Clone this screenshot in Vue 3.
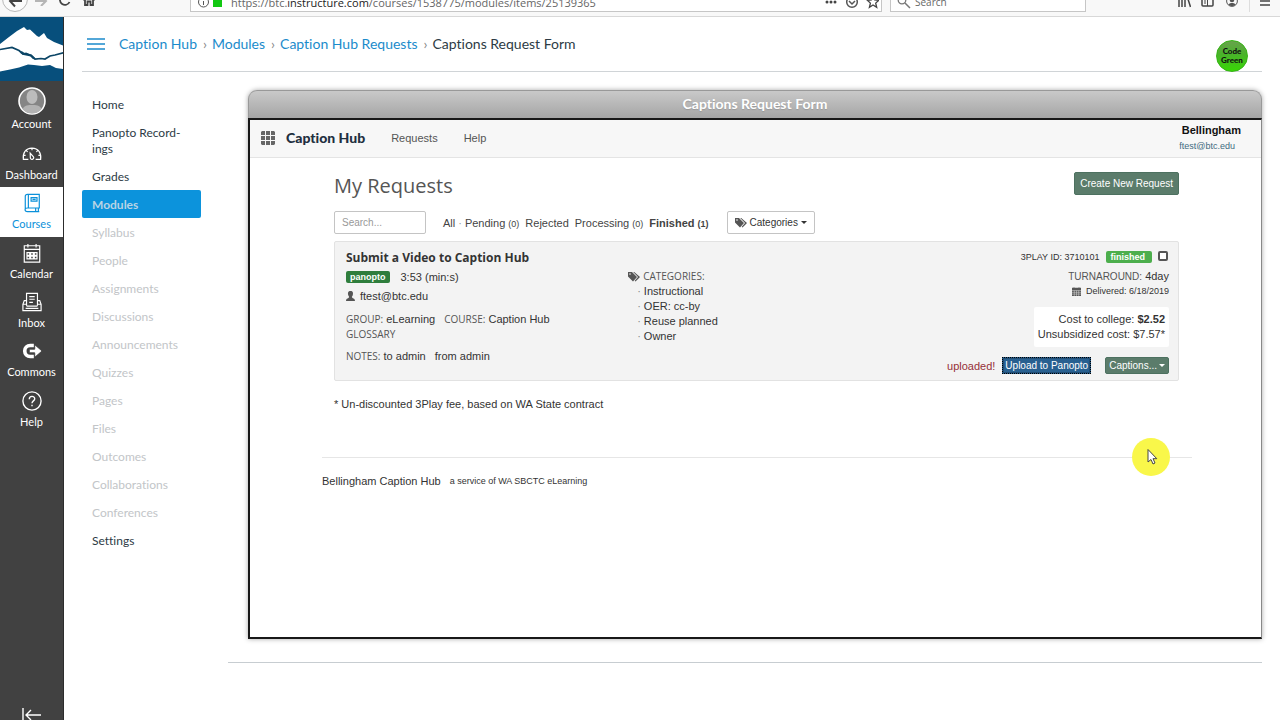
<script setup>
import { ref } from 'vue'

const search = ref('')
const selected = ref(false)

const menu = [
  { label: 'Home' },
  { label: 'Panopto Record-ings' },
  { label: 'Grades' },
  { label: 'Modules', state: 'active' },
  { label: 'Syllabus', state: 'off' },
  { label: 'People', state: 'off' },
  { label: 'Assignments', state: 'off' },
  { label: 'Discussions', state: 'off' },
  { label: 'Announcements', state: 'off' },
  { label: 'Quizzes', state: 'off' },
  { label: 'Pages', state: 'off' },
  { label: 'Files', state: 'off' },
  { label: 'Outcomes', state: 'off' },
  { label: 'Collaborations', state: 'off' },
  { label: 'Conferences', state: 'off' },
  { label: 'Settings' }
]
const categories = ['Instructional', 'OER: cc-by', 'Reuse planned', 'Owner']
</script>

<template>
  <div class="page">
    <div class="browser">
      <div class="nav-tools">
        <button class="back" aria-label="Back">
          <svg width="26" height="26" viewBox="0 0 26 26"><circle cx="13" cy="13" r="12.500" fill="#fbfbfb" stroke="#b9b9b9"/><path d="M20 15H8M13 9.500l-5 5.500 5 5.500" fill="none" stroke="#444" stroke-width="2"/></svg>
        </button>
        <button class="tool" aria-label="Forward">
          <svg width="14" height="14" viewBox="0 0 14 14"><path d="M1 9h11M7 4l5 5-5 5" fill="none" stroke="#b5b5b5" stroke-width="2"/></svg>
        </button>
        <button class="tool" aria-label="Reload">
          <svg width="14" height="14" viewBox="0 0 14 14"><path d="M11.500 10A5 5 0 1 1 11 5M12.500 2v4.500H8" fill="none" stroke="#444" stroke-width="1.800"/></svg>
        </button>
        <button class="tool" aria-label="Home page">
          <svg width="14" height="14" viewBox="0 0 14 14"><path d="M1 8l6-6 6 6M3 7.500V13h2.500V9.500h3V13H11V7.500M6 6.500h2" fill="none" stroke="#444" stroke-width="1.800"/></svg>
        </button>
      </div>
      <div class="url">
        <svg width="11" height="12" viewBox="0 0 11 12"><circle cx="5.500" cy="6" r="5" fill="none" stroke="#555"/><path d="M5.500 5v4M5.500 3v1" stroke="#555"/></svg>
        <span class="lock"></span>
        <span class="address">https://btc.<b>instructure.com</b>/courses/1538775/modules/items/25139365</span>
        <svg width="54" height="14" viewBox="0 0 54 14"><g fill="#444"><circle cx="2" cy="7" r="1.500"/><circle cx="6" cy="7" r="1.500"/><circle cx="10" cy="7" r="1.500"/></g><circle cx="27" cy="7" r="5.300" fill="none" stroke="#555" stroke-width="1.500"/><path d="M24 6l3 3 3-3" fill="none" stroke="#555" stroke-width="1.500"/><path d="M48 1l1.700 4 4 .3-3 2.800 1 4.200-3.700-2.300-3.600 2.300 1-4.200-3-2.800 4-.3z" fill="none" stroke="#444" stroke-width="1.300"/></svg>
      </div>
      <div class="find">
        <svg width="14" height="14" viewBox="0 0 14 14"><circle cx="5" cy="5" r="3.800" fill="none" stroke="#777" stroke-width="1.300"/><path d="M8 8l5 5" stroke="#777" stroke-width="1.500"/></svg>
        <span>Search</span>
      </div>
      <div class="right-tools">
        <svg width="13" height="14" viewBox="0 0 13 14"><path d="M1 1v12M4 1v12M7 1v12M9 2l3.500 11" stroke="#444" stroke-width="1.500"/></svg>
        <svg width="14" height="14" viewBox="0 0 14 14"><rect x="1" y="2" width="11" height="10" rx="1" fill="none" stroke="#444" stroke-width="1.500"/><path d="M6.500 2v10M3 7h2M3 9h2" stroke="#444"/></svg>
        <svg width="14" height="14" viewBox="0 0 14 14"><circle cx="7" cy="7" r="5.400" fill="none" stroke="#555"/><circle cx="7" cy="6" r="2.300" fill="#555"/><path d="M3.500 10.500c1-2 6-2 7 0-2 2-5 2-7 0z" fill="#555"/></svg>
        <i class="tool-rule"></i>
        <svg width="10" height="14" viewBox="0 0 10 14"><path d="M0 3h10M0 7h10M0 11h10" stroke="#444" stroke-width="1.600"/></svg>
      </div>
    </div>

    <div class="shell">
      <nav class="global" aria-label="Global">
        <a class="logo" href="#" aria-label="College home">
          <svg width="64" height="64" viewBox="0 0 64 64"><rect width="64" height="64" fill="#074f7c"/><path d="M0 27L9 20l8-6 7-4 3 3 3-.5 7 6.500 2 1 5-4 3 5 7 4 10 4v23l-8-1-6-3-8 1-8-1-6-.5-9 3-9 2-10 2z" fill="#fff"/><path d="M0 32.500l12-2 7 3 4 3.500 3-.5 5 2 4 3.500 6-.5 4 .5 5-3 5-1 9-2.500" fill="none" stroke="#0b4566" stroke-width="1.700"/><path d="M21 35l3 2 7 1.500 3 3" fill="none" stroke="#0b4566" stroke-width="2.200"/></svg>
        </a>
        <a class="account" href="#">
          <svg width="28" height="28" viewBox="0 0 28 28"><circle cx="14" cy="14" r="13" fill="#858585" stroke="#fff" stroke-width="1.600"/><ellipse cx="14" cy="10" rx="5.500" ry="7" fill="#bcbcbc"/><path d="M4.500 22c2-4 6-4 9.500-4s8 0 9.500 4c-5 6-14 6-19 0z" fill="#b2b2b2"/></svg>
          <span>Account</span>
        </a>
        <div class="rows">
          <a href="#">
            <svg width="20" height="20" viewBox="0 0 22 22" fill="none" stroke="#fff" stroke-width="1.300"><path d="M7 17H1.500C.5 10 4 4.500 11 4.500S21.500 10 20.500 17H15M11 4.500V7M4.500 7l1.700 1.700M17.500 7l-1.700 1.700M2 12.500h2M18 12.500h2"/><path d="M9 10l3.600 4.200c1.400 2.200-2.600 4-3.400 1.400z"/></svg>
            <span>Dashboard</span>
          </a>
          <a class="current" href="#">
            <svg width="20" height="20" viewBox="0 0 22 22" fill="none" stroke="#0b91da" stroke-width="1.300"><path d="M6 1.500h13v15H6c-3.500 0-3.500 4 0 4h13M3.600 18V3.500c0-1 .8-2 2.400-2M7 2v14M18 17v3M15 17v3"/><path d="M10 5h6.500v4H10zM11.500 7h3.500"/></svg>
            <span>Courses</span>
          </a>
          <a href="#">
            <svg width="20" height="20" viewBox="0 0 22 22" fill="none" stroke="#fff" stroke-width="1.300"><path d="M2.500 3h17v18h-17zM2.500 7h17M6.500 1v4M15.500 1v4"/><path d="M5.500 10.500h3v3h-3zM9.500 10.500h3v3h-3zM13.500 10.500h3v3h-3zM5.500 14.500h3v3h-3zM9.500 14.500h3v3h-3zM13.500 14.500h3v3h-3z"/></svg>
            <span>Calendar</span>
          </a>
          <a href="#">
            <svg width="20" height="20" viewBox="0 0 22 22" fill="none" stroke="#fff" stroke-width="1.300"><path d="M5 15V1.500h12V15M5 9.500H2.500L1 13.500v7h20v-7l-1.500-4H17M1 13.500h4M17 13.500h4M5 15.500h12M8 5h6M8 8h6M8 11.500h4M4 18h14"/></svg>
            <span>Inbox</span>
          </a>
          <a href="#">
            <svg width="20" height="20" viewBox="0 0 22 22"><path d="M13 5H9a6 6 0 0 0 0 12h4" fill="none" stroke="#fff" stroke-width="4"/><path d="M14 4L22 11 14 18v-5H8V9h6z" fill="#fff" stroke="#414141"/></svg>
            <span>Commons</span>
          </a>
          <a href="#">
            <svg width="20" height="20" viewBox="0 0 22 22" fill="none" stroke="#fff" stroke-width="1.500"><circle cx="11" cy="11" r="10"/><path d="M8 9c0-4 6-4 6-.5 0 2.500-3 2.300-3 5M11 15v1.800"/></svg>
            <span>Help</span>
          </a>
        </div>
        <button class="collapse" aria-label="Minimize navigation">
          <svg width="20" height="14" viewBox="0 0 20 14"><path d="M1 0v14M19 7H4M9 2L4 7l5 5" fill="none" stroke="#fff" stroke-width="1.400"/></svg>
        </button>
      </nav>

      <div class="main">
        <header class="top">
          <button class="burger" aria-label="Toggle course menu">
            <svg width="18" height="14" viewBox="0 0 18 14"><path d="M0 2h18M0 7h18M0 12h18" stroke="#1b8bcb" stroke-width="1.400"/></svg>
          </button>
          <nav class="crumbs" aria-label="Breadcrumb">
            <a href="#">Caption Hub</a><span class="sep">›</span>
            <a href="#">Modules</a><span class="sep">›</span>
            <a href="#">Caption Hub Requests</a><span class="sep">›</span>
            <span>Captions Request Form</span>
          </nav>
          <div class="code">Code<br>Green</div>
        </header>

        <div class="columns">
          <nav class="menu" aria-label="Course">
            <a v-for="m in menu" :key="m.label" href="#" :class="m.state">{{ m.label }}</a>
          </nav>

          <div class="content">
            <section class="panel">
              <h2 class="panel-title">Captions Request Form</h2>
              <div class="frame">
                <div class="hub-bar">
                  <svg width="14" height="14" viewBox="0 0 14 14" fill="#666"><path d="M1 0h3v4H0V1zM5 0h4v4H5zM10 0h3l1 1v3h-4zM0 5h4v4H0zM5 5h4v4H5zM10 5h4v4h-4zM0 10h4v4H1l-1-1zM5 10h4v4H5zM10 10h4v3l-1 1h-3z"/></svg>
                  <a class="brand" href="#">Caption Hub</a>
                  <a class="hub-link" href="#">Requests</a>
                  <a class="hub-link" href="#">Help</a>
                  <div class="user"><strong>Bellingham</strong><a href="#">ftest@btc.edu</a></div>
                </div>

                <div class="hub">
                  <div class="heading">
                    <h1>My Requests</h1>
                    <button class="btn create">Create New Request</button>
                  </div>

                  <div class="filters">
                    <input v-model="search" type="text" placeholder="Search..." aria-label="Search requests">
                    <div class="states">
                      <a href="#">All</a><span class="dot">·</span><a href="#">Pending <small>(0)</small></a>
                      <a href="#">Rejected</a>
                      <a href="#">Processing <small>(0)</small></a>
                      <a href="#"><b>Finished <small>(1)</small></b></a>
                    </div>
                    <button class="cats">
                      <svg width="12" height="10" viewBox="0 0 12 10" fill="#555"><path d="M0 0h4l5 5-4 4.500L0 4.500zM5.200 0h1L12 5 7.500 9.500l-.8-.7L10 5z"/><circle cx="2" cy="2" r=".8" fill="#fff"/></svg>
                      Categories <i class="caret"></i>
                    </button>
                  </div>

                  <article class="card">
                    <div class="info">
                      <h3>Submit a Video to Caption Hub</h3>
                      <p class="source"><span class="tag panopto">panopto</span>3:53 (min:s)</p>
                      <p class="owner">
                        <svg width="9" height="10" viewBox="0 0 9 10" fill="#555"><path d="M4.500 0C7 0 7.300 2 6.800 4c-.3 1-.9 1.500-.9 2C6 7.500 9 7 9 10H0c0-3 3-2.500 3.100-4 0-.5-.6-1-.9-2C1.700 2 2 0 4.500 0z"/></svg>
                        ftest@btc.edu
                      </p>
                      <p class="line"><span><em>GROUP:</em> eLearning</span><span><em>COURSE:</em> Caption Hub</span></p>
                      <p class="line"><em>GLOSSARY</em></p>
                      <p class="line notes"><span><em>NOTES:</em> to admin</span><span>from admin</span></p>
                    </div>

                    <div class="labels">
                      <p>
                        <svg width="12" height="10" viewBox="0 0 12 10" fill="#555"><path d="M0 0h4l5 5-4 4.500L0 4.500zM5.200 0h1L12 5 7.500 9.500l-.8-.7L10 5z"/><circle cx="2" cy="2" r=".8" fill="#f3f3f3"/></svg>
                        <em>CATEGORIES:</em>
                      </p>
                      <ul><li v-for="c in categories" :key="c">{{ c }}</li></ul>
                    </div>

                    <div class="status">
                      <p class="ident">3PLAY ID: 3710101 <span class="tag finished">finished</span>
                        <input v-model="selected" type="checkbox" aria-label="Select request"></p>
                      <p class="turn"><em>TURNAROUND:</em> 4day</p>
                      <p class="delivered">
                        <svg width="9" height="9" viewBox="0 0 9 9"><path d="M0 1h9v8H0zM2 0v1M7 0v1" fill="#555" stroke="#555" stroke-width=".5"/><path d="M0 3.500h9M0 5.300h9M0 7.100h9M2.300 3.500V9M4.500 3.500V9M6.700 3.500V9" stroke="#ddd" stroke-width=".5"/></svg>
                        Delivered: 6/18/2019
                      </p>
                      <div class="cost"><div>Cost to college: <b>$2.52</b></div><div>Unsubsidized cost: $7.57*</div></div>
                      <div class="actions">
                        <span class="done">uploaded!</span>
                        <button class="btn upload">Upload to Panopto</button>
                        <button class="btn small">Captions...<i class="caret"></i></button>
                      </div>
                    </div>
                  </article>

                  <p class="footnote">* Un-discounted 3Play fee, based on WA State contract</p>
                </div>

                <footer class="hub-foot"><span>Bellingham Caption Hub</span><small>a service of WA SBCTC eLearning</small></footer>
              </div>
            </section>
            <div class="end"></div>
          </div>
        </div>
      </div>
    </div>

    <div class="pointer">
      <svg width="38" height="38" viewBox="0 0 38 38"><circle cx="19" cy="19" r="19" fill="#f9f74a"/><path d="M16 11.500v12.500l3-2.500 2 4.500 2-1-2-4.300h3.800z" fill="#fff" stroke="#444"/></svg>
    </div>
  </div>
</template>

<style>
body { background: #fff; }
</style>

<style scoped>
* { box-sizing: border-box; }
h1, h2, h3, p, ul { margin: 0; padding: 0; }
a { color: inherit; text-decoration: none; }
em { font-style: normal; }
svg { flex: none; display: block; }
button { font-family: inherit; border: 0; padding: 0; background: none; cursor: pointer; }

.page { position: relative; height: 100vh; display: flex; flex-direction: column; overflow: hidden; font-family: Lato, sans-serif; font-variant-ligatures: none; color: #2d3b45; }

.browser { flex: none; display: flex; align-items: flex-end; height: 17px; padding: 0 10px 4px 2px; background: #f8f8f8; border-bottom: 1px solid #d8d8d8; font-family: "Open Sans", sans-serif; font-size: 10px; color: #666; }
.nav-tools { flex: none; width: 188px; height: 26px; display: flex; align-items: center; gap: 10px; }
.back { margin-right: -4px; }
.url, .find { height: 20px; display: flex; align-items: center; background: #fff; border: 1px solid #c6c6c6; }
.url { flex: 1; padding: 0 2px 0 7px; gap: 4px; }
.lock { width: 9px; height: 9px; background: #12c812; }
.address { flex: 1; padding-left: 5px; font-size: 11px; white-space: nowrap; }
.address b { font-weight: 400; color: #222; }
.find { width: 196px; margin-left: 8px; padding-left: 6px; gap: 4px; }
.right-tools { width: 184px; height: 22px; display: flex; justify-content: flex-end; align-items: center; gap: 10px; }
.tool-rule { width: 1px; height: 22px; background: #ddd; }

.shell { flex: 1; min-height: 0; display: flex; }
.global { flex: none; width: 64px; display: flex; flex-direction: column; overflow: hidden; background: #414141; border-right: 1px solid #2c2c2c; color: #fff; font-size: 11px; }
.logo { height: 64px; }
.account { height: 57px; padding-top: 6px; display: flex; flex-direction: column; align-items: center; line-height: 18px; }
.rows { height: 296px; flex: none; display: grid; grid-template-rows: repeat(6, 1fr); }
.rows a { display: flex; flex-direction: column; align-items: center; gap: 2px; padding-top: 6px; line-height: 18px; }
.rows a.current { background: #fff; color: #0b91da; }
.collapse { flex: none; align-self: center; margin: auto 0 -2px; }

.main { flex: 1; min-width: 0; display: flex; flex-direction: column; padding: 0 18px; }
.top { height: 55px; display: flex; align-items: center; border-bottom: 1px solid #d0d4d7; }
.burger { margin-left: 5px; }
.crumbs { flex: 1; display: flex; margin-left: 14px; font-size: 14px; line-height: 20px; white-space: nowrap; }
.crumbs a { color: #1b8bcb; }
.sep { margin: 0 5px 0 6px; color: #888; }
.code { width: 32px; height: 32px; align-self: flex-end; margin: 0 14px -1px 0; padding-top: 6px; border-radius: 50%; background: linear-gradient(#68a24c, #49b32a 45%, #38d805); border: 1px solid #35b414; font-size: 8px; font-weight: 900; line-height: 9px; text-align: center; color: #111; }

.columns { flex: 1; min-height: 0; display: flex; }
.menu { flex: none; width: 119px; padding-top: 18px; font-size: 12px; line-height: 16px; }
.menu a { display: block; padding: 7px 9px 5px 10px; border-radius: 2px; }
.menu a.off { color: #c2c5c8; }
.menu a.active { background: #0c93dc; color: #b9d4e4; font-weight: 700; }

.content { flex: 1; min-width: 0; padding: 18px 0 57px 27px; display: flex; flex-direction: column; }
.panel { flex: 1; min-height: 0; margin: 0 0 23px 20px; display: flex; flex-direction: column; border-radius: 9px 9px 0 0; box-shadow: 0 0 5px rgba(0, 0, 0, .35); }
.panel-title { height: 28px; border: 1px solid #999; border-bottom: 0; border-radius: 9px 9px 0 0; background: linear-gradient(#c9c9c9, #a5a5a5); color: #fff; font-size: 14px; line-height: 26px; text-align: center; text-shadow: 0 1px 1px #999; }
.frame { flex: 1; min-height: 0; background: #fff; border: 2px solid #181818; border-right: 1px solid #888; font-family: "Liberation Sans", Arial, sans-serif; font-size: 11px; color: #333; }
.end { height: 1px; background: #c7cdd1; }

.hub-bar { height: 38px; display: flex; align-items: center; padding: 0 20px 2px 11px; background: #f7f7f7; border-bottom: 1px solid #e4e4e4; }
.brand { margin-left: 11px; font-family: Lato, sans-serif; font-size: 14px; font-weight: 900; color: #1f2f40; }
.hub-link { margin-left: 26px; color: #555; }
.user { margin-left: auto; display: flex; flex-direction: column; align-items: flex-end; line-height: 16px; }
.user strong { color: #111; }
.user a { margin-right: 6px; font-size: 9px; color: #3f6b80; }

.hub { padding: 14px 82px 0 84px; }
.heading { display: flex; justify-content: space-between; align-items: flex-start; }
h1 { font-family: "Open Sans", sans-serif; font-size: 20px; font-weight: 400; line-height: 28px; color: #555; }
.btn { background: #5b7c6b; color: #fff; border: 1px solid #4d7160; border-radius: 2px; font-size: 10px; white-space: nowrap; }
.create { height: 23px; padding: 0 5px; }

.filters { display: flex; align-items: center; margin-top: 11px; }
.filters input { width: 92px; height: 23px; padding: 0 7px; border: 1px solid #c4c4c4; border-radius: 2px; font: 10px "Liberation Sans", Arial, sans-serif; }
.filters input::placeholder { color: #999; }
.states { display: flex; gap: 6px; margin-left: 17px; color: #444; white-space: nowrap; }
.states small { font-size: 9px; }
.dot { margin: 0 -3px; color: #999; }
.cats { display: flex; align-items: center; gap: 3px; height: 23px; margin-left: 18px; padding: 0 7px; background: #fff; border: 1px solid #c4c4c4; border-radius: 2px; font-size: 10px; color: #333; }
.caret { display: inline-block; border: 3px solid transparent; border-top-color: currentColor; border-bottom: 0; vertical-align: middle; }

.card { display: grid; grid-template-columns: 12fr 9fr 14fr; margin-top: 7px; padding: 7px 9px 6px 11px; background: #f3f3f3; border: 1px solid #e2e2e2; border-radius: 2px; }
.card em { font-family: "Open Sans", sans-serif; font-size: 10px; color: #555; }
h3 { font-family: "Open Sans", sans-serif; font-size: 12px; font-weight: 700; line-height: 18px; color: #333; }
.tag { border-radius: 2px; color: #fff; font-size: 9px; font-weight: 700; line-height: 12px; padding: 0 4px; }
.panopto { background: #2e7d3c; margin-right: 11px; }
.finished { background: #4cae4c; margin-left: 4px; padding-right: 7px; }
.source, .owner, .ident, .delivered { display: flex; align-items: center; }
.source { height: 20px; }
.owner { height: 18px; gap: 5px; margin-bottom: 6px; }
.line { display: flex; gap: 9px; line-height: 16px; }
.line em { line-height: 15px; }
.notes { margin-top: 6px; }
.labels { padding-top: 20px; line-height: 15px; }
.labels p { display: flex; align-items: center; gap: 3px; height: 15px; }
.labels li { display: flex; gap: 3px; margin-left: 9px; }
.labels li::before { content: "·"; color: #888; }
.status { display: flex; flex-direction: column; align-items: flex-end; white-space: nowrap; }
.ident { height: 16px; gap: 3px; font-size: 9px; }
.ident input { appearance: none; width: 10px; height: 10px; margin: 0 1px 2px 3px; border: 2px solid #555; border-radius: 2px; background: #fff; }
.turn { margin-top: 3px; line-height: 16px; }
.turn em { font-family: inherit; }
.delivered { height: 12px; gap: 5px; font-size: 9px; }
.cost { margin-top: 10px; padding: 5px 4px; background: #fff; border-radius: 2px; line-height: 15px; text-align: right; }
.actions { display: flex; align-items: center; margin-top: 10px; }
.done { color: #963038; }
.actions .btn { height: 17px; padding: 0 3px; }
.actions .small { display: flex; align-items: center; gap: 2px; }
.actions .upload { margin: 0 14px 0 7px; padding: 0 2px; background: #286090; border: 1px dotted #000; outline: 1px solid #204d74; outline-offset: -2px; border-radius: 0; }

.footnote { margin-top: 16px; line-height: 14px; }
.hub-foot { display: flex; gap: 9px; align-items: center; margin: 46px 69px 0 72px; padding-top: 16px; border-top: 1px solid #e6e6e6; line-height: 14px; }
.hub-foot small { font-size: 9px; }
.pointer { position: absolute; left: 1132px; top: 438px; pointer-events: none; }
</style>
